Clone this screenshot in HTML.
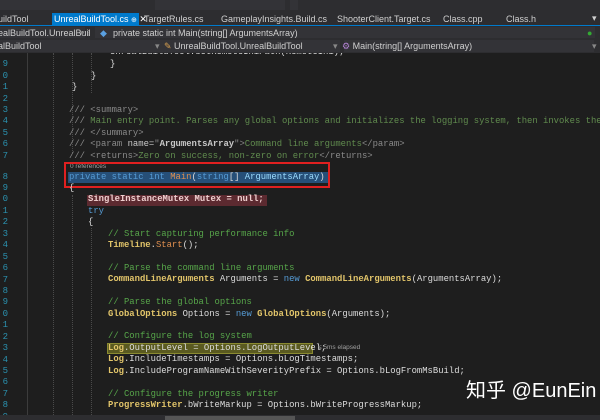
<!DOCTYPE html>
<html><head><style>
*{margin:0;padding:0;box-sizing:border-box}
body{width:600px;height:420px;overflow:hidden;background:#1e1e1e;font-family:"Liberation Sans",sans-serif;position:relative}
.abs{position:absolute}
.ui{font-size:9px;color:#d0d0d0;white-space:nowrap}
#code{position:absolute;left:0;top:53px;width:600px;height:362px;overflow:hidden;background:#1e1e1e}
.ln{position:absolute;left:0;width:8px;font:9px "Liberation Mono",monospace;color:#2b91af;text-align:right;line-height:11.43px;overflow:hidden}
.c{position:absolute;font:8.9px "Liberation Mono",monospace;color:#dcdcdc;white-space:pre;line-height:11.43px;height:11.43px}
.g{color:#57a64a}.d{color:#608b4e}.dg{color:#8a8a8a}.k{color:#569cd6}.t{color:#e2c56a;font-weight:bold}.m{color:#e08f4f}.s{color:#d69d85}
.guide{position:absolute;width:0;border-left:1px dotted #4a4a4a}
</style></head><body>
<div class="abs" style="left:0;top:0;width:600px;height:12px;background:#2d2d30"></div>
<div class="abs" style="left:0;top:0;width:80px;height:10px;background:#333337"></div>
<div class="abs" style="left:155px;top:0;width:130px;height:10px;background:#333337"></div>
<div class="abs" style="left:290px;top:0;width:8px;height:10px;background:#333337"></div>
<div class="abs" style="left:0;top:12px;width:600px;height:14px;background:#2d2d30"></div>
<div class="abs" style="left:52px;top:13px;width:87px;height:12px;background:#007acc"></div>
<div class="abs" style="left:0;top:25px;width:600px;height:1px;background:#007acc"></div>
<div class="abs ui" style="left:-2px;top:14px">uildTool</div>
<div class="abs ui" style="left:54px;top:14px;color:#fff">UnrealBuildTool.cs <span style="font-size:7px">⊕</span> ✕</div>
<div class="abs ui" style="left:144px;top:14px">TargetRules.cs</div>
<div class="abs ui" style="left:221px;top:14px">GameplayInsights.Build.cs</div>
<div class="abs ui" style="left:337px;top:14px">ShooterClient.Target.cs</div>
<div class="abs ui" style="left:443px;top:14px">Class.cpp</div>
<div class="abs ui" style="left:506px;top:14px">Class.h</div>
<div class="abs ui" style="left:592px;top:13px">▾</div>
<div class="abs" style="left:0;top:26px;width:600px;height:13px;background:#2d2d30"></div>
<div class="abs" style="left:0;top:27px;width:85px;height:11px;background:#333337"></div>
<div class="abs" style="left:95px;top:27px;width:500px;height:11px;background:#333337"></div>
<div class="abs ui" style="left:-2px;top:28px">ealBuildTool.UnrealBuil</div>
<div class="abs ui" style="left:80px;top:28px;color:#888">▾ ⁝</div>
<div class="abs ui" style="left:100px;top:28px;color:#5aa0e0">◆</div>
<div class="abs ui" style="left:113px;top:28px">private static int Main(string[] ArgumentsArray)</div>
<div class="abs ui" style="left:587px;top:28px;color:#3a3">●</div>
<div class="abs" style="left:0;top:39px;width:600px;height:14px;background:#2d2d30"></div>
<div class="abs" style="left:0;top:40px;width:340px;height:12px;background:#333337"></div>
<div class="abs" style="left:344px;top:40px;width:250px;height:12px;background:#333337"></div>
<div class="abs ui" style="left:-2px;top:41px">alBuildTool</div>
<div class="abs ui" style="left:155px;top:41px;color:#888">▾</div>
<div class="abs ui" style="left:164px;top:41px"><span style="color:#d8a050">✎</span> UnrealBuildTool.UnrealBuildTool</div>
<div class="abs ui" style="left:333px;top:41px;color:#888">▾</div>
<div class="abs ui" style="left:342px;top:41px"><span style="color:#b080d0">⚙</span> Main(string[] ArgumentsArray)</div>
<div class="abs ui" style="left:592px;top:41px;color:#888">▾</div>

<div id="code">
<div class="abs" style="left:27px;top:0;width:1px;height:362px;background:#3c3c3c"></div>
<div class="guide" style="left:53px;top:0;height:362px"></div>
<div class="guide" style="left:72px;top:0;height:100px"></div>
<div class="guide" style="left:72px;top:142px;height:220px"></div>
<div class="guide" style="left:91px;top:0;height:40px"></div>
<div class="guide" style="left:91px;top:175px;height:187px"></div>

<div class="ln" style="top:6.3px">9<br>0<br>1<br>2<br>3<br>4<br>5<br>6<br>7</div>
<div class="ln" style="top:118.6px">8<br>9<br>0<br>1<br>2<br>3<br>4<br>5<br>6<br>7<br>8<br>9<br>0<br>1<br>2<br>3<br>4<br>5<br>6<br>7<br>8<br>9</div>

<div class="c" style="left:110px;top:-6px">UnrealBuildTool.SetRemoteIniPath(RemoteIni);</div>
<div class="c" style="left:110px;top:6.3px">}</div>
<div class="c" style="left:91px;top:17.7px">}</div>
<div class="c" style="left:72px;top:29.1px">}</div>
<div class="c" style="left:69px;top:52px"><span class="dg">/// &lt;summary&gt;</span></div>
<div class="c" style="left:69px;top:63.4px"><span class="dg">///</span><span class="d"> Main entry point. Parses any global options and initializes the logging system, then invokes the appropriate</span></div>
<div class="c" style="left:69px;top:74.8px"><span class="dg">/// &lt;/summary&gt;</span></div>
<div class="c" style="left:69px;top:86.2px"><span class="dg">/// &lt;param </span><span style="color:#c8c8c8">name=</span><span class="dg">"</span><span style="color:#c8c8c8;font-weight:bold">ArgumentsArray</span><span class="dg">"&gt;</span><span class="d">Command line arguments</span><span class="dg">&lt;/param&gt;</span></div>
<div class="c" style="left:69px;top:97.6px"><span class="dg">/// &lt;returns&gt;</span><span class="d">Zero on success, non-zero on error</span><span class="dg">&lt;/returns&gt;</span></div>
<div class="abs" style="left:70px;top:110px;font-size:6.5px;color:#a0a0a0">0 references</div>
<div class="abs" style="left:68px;top:118.8px;width:260px;height:11px;background:#264f78"></div>
<div class="c" style="left:69px;top:118.6px"><span class="k">private static int </span><span class="m">Main</span>(<span class="k">string</span>[] <span style="color:#9cdcfe">ArgumentsArray</span>)</div>
<div class="abs" style="left:64px;top:109px;width:266px;height:26px;border:2px solid #e02020"></div>
<div class="c" style="left:69px;top:130px">{</div>
<div class="abs" style="left:87px;top:141.5px;width:180px;height:11px;background:#5c2a30"></div>
<div class="c" style="left:88px;top:141.4px"><span class="t" style="color:#f0d0d0">SingleInstanceMutex Mutex = null;</span></div>
<div class="c" style="left:88px;top:152.8px"><span class="k">try</span></div>
<div class="c" style="left:88px;top:164.2px">{</div>
<div class="c" style="left:108px;top:175.6px"><span class="g">// Start capturing performance info</span></div>
<div class="c" style="left:108px;top:187px"><span class="t">Timeline</span>.<span class="m">Start</span>();</div>
<div class="c" style="left:108px;top:209.9px"><span class="g">// Parse the command line arguments</span></div>
<div class="c" style="left:108px;top:221.3px"><span class="t">CommandLineArguments</span> Arguments = <span class="k">new</span> <span class="t">CommandLineArguments</span>(ArgumentsArray);</div>
<div class="c" style="left:108px;top:244.1px"><span class="g">// Parse the global options</span></div>
<div class="c" style="left:108px;top:255.5px"><span class="t">GlobalOptions</span> Options = <span class="k">new</span> <span class="t">GlobalOptions</span>(Arguments);</div>
<div class="c" style="left:108px;top:278.4px"><span class="g">// Configure the log system</span></div>
<div class="abs" style="left:107px;top:289.9px;width:206px;height:11px;background:#5a5a20;border:1px solid #8a8a30"></div>
<div class="c" style="left:108px;top:289.8px"><span class="t">Log</span>.OutputLevel = Options.LogOutputLevel;</div>
<div class="abs" style="left:318px;top:291px;font-size:6.5px;color:#a0a0a0;white-space:nowrap">≤ 5ms elapsed</div>
<div class="c" style="left:108px;top:301.2px"><span class="t">Log</span>.IncludeTimestamps = Options.bLogTimestamps;</div>
<div class="c" style="left:108px;top:312.6px"><span class="t">Log</span>.IncludeProgramNameWithSeverityPrefix = Options.bLogFromMsBuild;</div>
<div class="c" style="left:108px;top:335.5px"><span class="g">// Configure the progress writer</span></div>
<div class="c" style="left:108px;top:346.9px"><span class="t">ProgressWriter</span>.bWriteMarkup = Options.bWriteProgressMarkup;</div>
<div class="abs" style="left:466px;top:326px;font:20px 'Liberation Sans','Noto Sans CJK SC',sans-serif;color:#fff;white-space:nowrap;line-height:24px">知乎 @EunEin</div>
</div>
<div class="abs" style="left:0;top:415px;width:600px;height:5px;background:#2d2d30"></div>
<div class="abs" style="left:165px;top:416px;width:130px;height:4px;background:#555"></div>
</body></html>
